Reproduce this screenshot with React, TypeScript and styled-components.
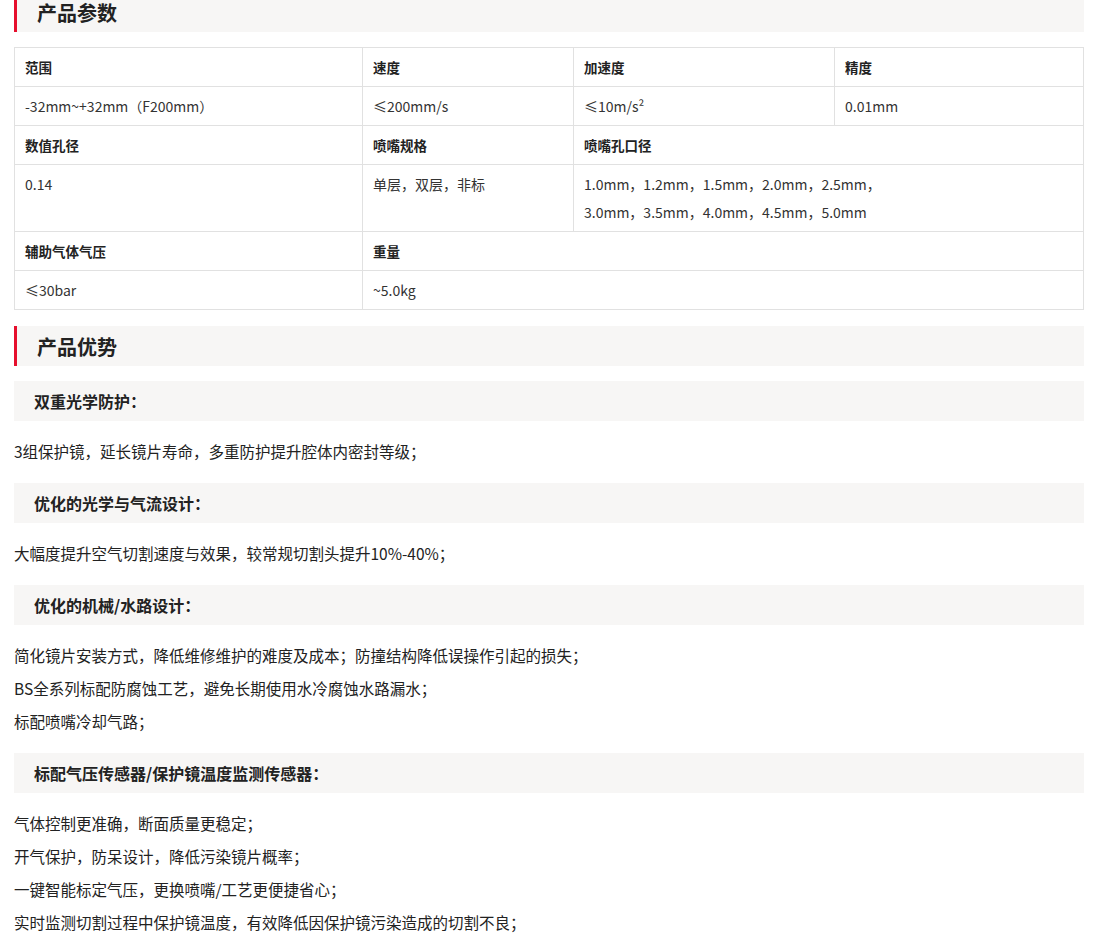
import styled, { createGlobalStyle } from "styled-components";

const Global = createGlobalStyle`
  body { margin: 0; background: #fff; font-family: "Microsoft YaHei", "Noto Sans CJK SC", "Liberation Sans", sans-serif; color: #333; }
`;

const Page = styled.div`
  margin: -8px 11px 0 14px;
`;

const SectionTitle = styled.h2`
  margin: 0;
  height: 40px;
  display: flex;
  align-items: center;
  padding-left: 20px;
  border-left: 3px solid #e60f2d;
  background: #f7f6f5;
  font-size: 20px;
  font-weight: bold;
  color: #222;
`;

const Table = styled.table`
  width: 100%;
  margin: 15px 0 16px;
  border-collapse: collapse;
  font-size: 14px;
  color: #333;
  td {
    border: 1px solid #e1e1e1;
    padding: 0 10px;
    height: 38px;
    vertical-align: middle;
  }
`;

const HeadCell = styled.td`
  font-weight: bold;
  font-size: 13.5px;
  color: #222;
`;

const TopCell = styled.td`
  && { vertical-align: top; padding-top: 5px; padding-bottom: 5px; line-height: 28px; }
`;

const SubTitle = styled.h3`
  margin: 15px 0 0;
  height: 40px;
  display: flex;
  align-items: center;
  padding-left: 20px;
  background: #f7f6f5;
  font-size: 16px;
  font-weight: bold;
  color: #222;
`;

const Body = styled.div`
  padding: 14px 0 0;
  font-size: 15.5px;
  line-height: 33px;
  color: #222;
  p { margin: 0; }
`;

const advantages: [string, string[]][] = [
  ["双重光学防护：", ["3组保护镜，延长镜片寿命，多重防护提升腔体内密封等级；"]],
  ["优化的光学与气流设计：", ["大幅度提升空气切割速度与效果，较常规切割头提升10%-40%；"]],
  ["优化的机械/水路设计：", [
    "简化镜片安装方式，降低维修维护的难度及成本；防撞结构降低误操作引起的损失；",
    "BS全系列标配防腐蚀工艺，避免长期使用水冷腐蚀水路漏水；",
    "标配喷嘴冷却气路；",
  ]],
  ["标配气压传感器/保护镜温度监测传感器：", [
    "气体控制更准确，断面质量更稳定；",
    "开气保护，防呆设计，降低污染镜片概率；",
    "一键智能标定气压，更换喷嘴/工艺更便捷省心；",
    "实时监测切割过程中保护镜温度，有效降低因保护镜污染造成的切割不良；",
  ]],
];

export default function App() {
  return (
    <Page>
      <Global />
      <SectionTitle>产品参数</SectionTitle>
      <Table>
        <colgroup>
          <col style={{ width: 348 }} />
          <col style={{ width: 211 }} />
          <col style={{ width: 261 }} />
          <col />
        </colgroup>
        <tbody>
          <tr><HeadCell>范围</HeadCell><HeadCell>速度</HeadCell><HeadCell>加速度</HeadCell><HeadCell>精度</HeadCell></tr>
          <tr><td>-32mm~+32mm（F200mm）</td><td>≤200mm/s</td><td>≤10m/s²</td><td>0.01mm</td></tr>
          <tr><HeadCell>数值孔径</HeadCell><HeadCell>喷嘴规格</HeadCell><HeadCell colSpan={2}>喷嘴孔口径</HeadCell></tr>
          <tr>
            <TopCell>0.14</TopCell>
            <TopCell>单层，双层，非标</TopCell>
            <TopCell colSpan={2}>1.0mm，1.2mm，1.5mm，2.0mm，2.5mm，<br />3.0mm，3.5mm，4.0mm，4.5mm，5.0mm</TopCell>
          </tr>
          <tr><HeadCell>辅助气体气压</HeadCell><HeadCell colSpan={3}>重量</HeadCell></tr>
          <tr><td>≤30bar</td><td colSpan={3}>~5.0kg</td></tr>
        </tbody>
      </Table>
      <SectionTitle>产品优势</SectionTitle>
      {advantages.map(([title, lines]) => (
        <div key={title}>
          <SubTitle>{title}</SubTitle>
          <Body>{lines.map((l) => <p key={l}>{l}</p>)}</Body>
        </div>
      ))}
    </Page>
  );
}
